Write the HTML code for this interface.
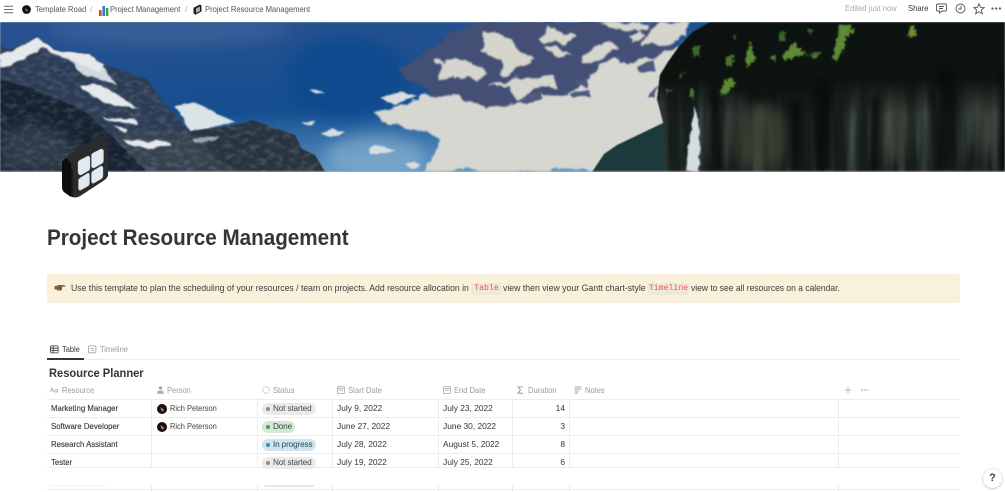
<!DOCTYPE html>
<html lang="en">
<head>
<meta charset="utf-8">
<title>Project Resource Management</title>
<style>
html,body{margin:0;padding:0;background:#fff}
body{width:1005px;height:492px;position:relative;overflow:hidden;font-family:"Liberation Sans",sans-serif;color:#37352f}
.t{position:absolute;white-space:nowrap;line-height:12px;font-size:8.4px;filter:blur(.25px)}
.s{transform:scaleX(.91);transform-origin:0 50%}
.r{transform:scaleX(.93);transform-origin:0 50%;-webkit-text-stroke:.12px #37352f}
.c{transform:scaleX(.925);transform-origin:0 50%;font-size:9.2px;color:#3f3d38}
.l{position:absolute;background:#ededec}
.pill{position:absolute;height:12px;border-radius:6px;font-size:8.2px;line-height:12px;white-space:nowrap;padding-left:11px;box-sizing:border-box;filter:blur(.25px);letter-spacing:-.14px}
.pill:before{content:"";position:absolute;left:4px;top:4px;width:4px;height:4px;border-radius:50%;background:var(--d)}
.h{color:#9b9a97;font-size:8.2px;transform:scaleX(.92);transform-origin:0 50%}
svg{position:absolute;overflow:visible}
code{position:absolute;font-family:"Liberation Mono",monospace;font-size:8.2px;line-height:12px;height:12px;background:#eee8d8;color:#eb5757;border-radius:2px;text-align:center;filter:blur(.25px)}
</style>
</head>
<body>
<!-- top bar -->
<svg style="left:4px;top:5px" width="10" height="10" viewBox="0 0 10 10"><path d="M0 1.2H9M0 4.5H9M0 7.8H9" stroke="#6b6a66" stroke-width="1"/></svg>
<svg style="left:22px;top:5px" width="9" height="9" viewBox="0 0 9 9"><circle cx="4.5" cy="4.5" r="4.4" fill="#14110f"/><path d="M3 3.2L6 5.2 5 6.6 3.4 5Z" fill="#b87a52"/></svg>
<div class="t s" style="left:35px;top:3px;color:#55534e">Template Road</div>
<div class="t" style="left:90px;top:3px;color:#b5b4b0">/</div>
<svg style="left:99px;top:5px" width="10" height="11" viewBox="0 0 10 11"><rect x="0" y="5" width="2.6" height="6" fill="#d8433b"/><rect x="3.4" y="1" width="2.6" height="10" fill="#3a7bc8"/><rect x="6.8" y="3" width="2.6" height="8" fill="#3aa655"/></svg>
<div class="t s" style="left:110px;top:3px;color:#55534e">Project Management</div>
<div class="t" style="left:185px;top:3px;color:#b5b4b0">/</div>
<svg style="left:193px;top:4px" width="9" height="11" viewBox="0 0 9 11"><path d="M1 3.5L7 .5 8.5 1.5V7.5L2.5 10.8 .5 9.5V4Z" fill="#1f2021"/><path d="M3 4.5L7 2.5V7L3 9Z" fill="#9fb2bd"/></svg>
<div class="t s" style="left:205px;top:3px;color:#55534e">Project Resource Management</div>
<div class="t s" style="left:845px;top:2px;color:#a9a8a4">Edited just now</div>
<div class="t s" style="left:907.5px;top:2px;color:#37352f">Share</div>
<svg style="left:936px;top:3px" width="11" height="11" viewBox="0 0 11 11" fill="none" stroke="#55534e" stroke-width=".9"><path d="M1.5 1H9.5A1 1 0 0 1 10.5 2V7A1 1 0 0 1 9.5 8H6L3.5 10V8H1.5A1 1 0 0 1 .5 7V2A1 1 0 0 1 1.5 1Z"/><path d="M3 3.5H8M3 5.5H7"/></svg>
<svg style="left:955px;top:3px" width="11" height="11" viewBox="0 0 11 11" fill="none" stroke="#55534e" stroke-width=".9"><circle cx="5.5" cy="5.5" r="4.5"/><path d="M6 2.8V6H3.2"/></svg>
<svg style="left:973px;top:3px" width="12" height="12" viewBox="0 0 12 12" fill="none" stroke="#55534e" stroke-width=".9"><path d="M6 .8L7.5 4.3 11.2 4.6 8.4 7 9.3 10.8 6 8.8 2.7 10.8 3.6 7 .8 4.6 4.5 4.3Z"/></svg>
<svg style="left:991px;top:7px" width="11" height="3" viewBox="0 0 11 3" fill="#55534e"><circle cx="1.5" cy="1.5" r="1.1"/><circle cx="5.2" cy="1.5" r="1.1"/><circle cx="8.9" cy="1.5" r="1.1"/></svg>

<!-- banner -->
<div style="position:absolute;left:0;top:22px;width:1005px;height:150px;overflow:hidden">
<svg style="left:0;top:0;filter:blur(.5px)" width="1005" height="150" viewBox="0 0 1005 150" color-interpolation-filters="sRGB">
<defs>
<linearGradient id="sky" x1="0" y1="0" x2=".4" y2="1"><stop offset="0" stop-color="#2a5290"/><stop offset=".6" stop-color="#144e90"/><stop offset="1" stop-color="#5f97c4"/></linearGradient>
<filter id="cloud" x="-10%" y="-10%" width="120%" height="120%" color-interpolation-filters="sRGB"><feTurbulence type="fractalNoise" baseFrequency="0.05" numOctaves="4" seed="3" result="n"/><feDisplacementMap in="SourceGraphic" in2="n" scale="16" xChannelSelector="R" yChannelSelector="G"/><feGaussianBlur stdDeviation=".7"/></filter>
<filter id="rock" x="-5%" y="-5%" width="110%" height="110%" color-interpolation-filters="sRGB"><feTurbulence type="fractalNoise" baseFrequency="0.09" numOctaves="3" seed="11" result="n"/><feDisplacementMap in="SourceGraphic" in2="n" scale="5" xChannelSelector="R" yChannelSelector="G"/><feGaussianBlur stdDeviation=".4"/></filter>
<filter id="rough" x="-40%" y="-40%" width="180%" height="180%" color-interpolation-filters="sRGB"><feTurbulence type="fractalNoise" baseFrequency="0.3" numOctaves="2" seed="4" result="n"/><feDisplacementMap in="SourceGraphic" in2="n" scale="7" xChannelSelector="R" yChannelSelector="G"/><feGaussianBlur stdDeviation=".45"/></filter>
<filter id="b2" x="-40%" y="-40%" width="180%" height="180%"><feGaussianBlur stdDeviation="3"/></filter>
<filter id="b6" x="-60%" y="-60%" width="220%" height="220%"><feGaussianBlur stdDeviation="7"/></filter>
<filter id="streak" x="0" y="0" width="100%" height="100%" color-interpolation-filters="sRGB"><feTurbulence type="fractalNoise" baseFrequency="0.085 0.007" numOctaves="3" seed="8"/><feColorMatrix values="0 0 0 0 .25  0 0 0 0 .29  0 0 0 0 .27  2.4 0 0 0 -1"/><feGaussianBlur stdDeviation=".8"/></filter>
<filter id="grain" x="0" y="0" width="100%" height="100%" color-interpolation-filters="sRGB"><feTurbulence type="fractalNoise" baseFrequency="0.12 0.22" numOctaves="3" seed="21"/><feColorMatrix values="0 0 0 0 .55  0 0 0 0 .6  0 0 0 0 .68  2.4 0 0 0 -1.05"/></filter>
<clipPath id="cliff"><path d="M657 77L660 53 668 40 680 23 693 10 710 0H1005V150H665L663 100Z"/></clipPath>
<clipPath id="mtn"><path d="M0 22L8 28 38 15 55 28 90 32 105 43 147 57 163 80 188 107 190 109 240 102 252 98 295 113 302 127 315 133 325 150H0Z"/></clipPath>
<clipPath id="hill"><path d="M0 57L33 67 83 88 113 115 147 150H0Z"/></clipPath>
<linearGradient id="top" x1="0" y1="0" x2="0" y2="1"><stop offset="0" stop-color="#0d1310"/><stop offset=".38" stop-color="#0d1310"/><stop offset=".62" stop-color="#0d1310" stop-opacity="0"/></linearGradient>
</defs>
<rect width="1005" height="150" fill="url(#sky)"/>
<ellipse cx="170" cy="8" rx="120" ry="16" fill="#4a6a9c" opacity=".5" filter="url(#b6)"/>
<ellipse cx="345" cy="55" rx="60" ry="40" fill="#0f4a8e" filter="url(#b6)"/>
<ellipse cx="375" cy="135" rx="50" ry="22" fill="#8db4d2" opacity=".6" filter="url(#b6)"/>
<!-- dark cloud mass -->
<path d="M425 30L480 0H680L670 45 640 65 560 70 500 90 470 86 440 78 415 62 400 45Z" fill="#434f74" filter="url(#cloud)"/>
<!-- main lower cloud -->
<path d="M373 93L423 75 457 72 473 82 507 85 517 80 547 72 570 70 590 57 600 43 633 37 660 33 685 20 690 90 640 150H430L440 117 407 107 397 100 383 100Z" fill="#d7d7d1" filter="url(#cloud)"/>
<!-- upper cloud patches -->
<g fill="#d5d5ce" filter="url(#cloud)">
<path d="M547 5L573 13 563 22 537 18Z"/>
<path d="M487 10L510 17 537 37 510 53 497 53 503 37 480 27Z"/>
<path d="M438 38L453 33 487 50 477 60 457 57 437 57Z"/>
<path d="M583 33L607 18 620 28 600 38 583 40Z"/>
<path d="M627 10L643 5 647 12 633 22Z"/>
<path d="M640 23L660 0 690 0 685 15 660 22Z"/>
<path d="M487 63L513 57 553 53 553 67 540 67 517 78 513 63Z"/>
<path d="M547 23L570 30 553 37Z"/>
<path d="M600 0H650V4L615 6Z"/>
</g>
<g fill="#4c5a80" filter="url(#rock)">
<path d="M570 71L590 68 592 74 574 75Z"/>
<path d="M517 80L540 70 543 77 527 82Z"/>
<path d="M647 75L657 64 655 76Z"/>
<path d="M637 44L653 38 655 50 640 50Z"/>
<path d="M573 60L588 57 587 67Z"/>
</g>
<g fill="#d8dde0" filter="url(#rock)">
<path d="M380 75L400 71 418 73 393 83Z"/>
<path d="M368 128L375 123 397 128 370 133Z"/>
<path d="M405 143L413 138 420 143 412 147Z"/>
<path d="M310 67L318 68 325 71 316 72Z"/>
<path d="M320 112L332 107 345 110 330 116Z"/>
<path d="M302 100L315 99 313 104Z"/>
</g>
<!-- mountains -->
<path d="M175 83L195 80 235 100 190 110Z" fill="#dbe3e7" filter="url(#rock)"/>
<g clip-path="url(#mtn)">
<rect width="340" height="150" fill="#2d3c55"/>
<path d="M186 112L240 102 252 98 295 113 302 127 315 133 325 150H150Z" fill="#28333e"/>
<path d="M110 110L190 110 230 150H130Z" fill="#36434f" filter="url(#b2)"/>
<rect width="340" height="150" filter="url(#grain)" opacity=".35"/>
<g fill="#e4e9ec" filter="url(#rock)">
<path d="M13 28L38 15 55 28 90 32 105 43 98 50 84 44 63 36 42 26 25 36 10 44 0 46V32Z"/>
<path d="M63 33L100 43 117 63 83 53Z" opacity=".9"/>
<path d="M80 63L100 63 118 73 138 87 113 83 93 75Z"/>
<path d="M103 95L137 98 138 102 113 100Z"/>
<path d="M112 105L127 107 125 111Z"/>
<path d="M122 118L170 120 172 123 150 127 133 125Z"/>
<path d="M193 117L220 114 212 120 195 121Z" opacity=".6"/>
</g>
</g>
<!-- front hill -->
<g clip-path="url(#hill)">
<rect width="160" height="150" fill="#172230"/>
<path d="M0 110L30 100 60 110 100 150H0Z" fill="#3a4654" opacity=".7" filter="url(#b6)"/>
<rect width="160" height="150" filter="url(#grain)" opacity=".3"/>
</g>
<!-- forest and cliff -->
<path d="M592 150L604 132 617 123 640 112 663 101 670 150Z" fill="#1c3a3c"/>
<g clip-path="url(#cliff)">
<rect x="650" width="355" height="150" fill="#161d1d"/>
<rect x="650" y="20" width="355" height="130" filter="url(#streak)"/>
<ellipse cx="985" cy="85" rx="18" ry="45" fill="#4a5244" opacity=".5" filter="url(#b6)"/>
<ellipse cx="895" cy="100" rx="16" ry="40" fill="#4a5240" opacity=".5" filter="url(#b6)"/>
<ellipse cx="760" cy="115" rx="30" ry="35" fill="#4a4f38" opacity=".5" filter="url(#b6)"/>
<rect x="650" width="355" height="150" fill="url(#top)"/>
<path d="M655 60L700 55 760 80 820 58 900 48 1005 45V0H655Z" fill="#0d1310" filter="url(#b2)" opacity=".85"/>
<g filter="url(#b2)" fill="#080c0c" opacity=".8">
<rect x="658" y="85" width="8" height="65" opacity=".4"/>
<rect x="710" y="70" width="10" height="80"/>
<rect x="790" y="80" width="11" height="70"/>
<rect x="815" y="60" width="18" height="90"/>
<rect x="870" y="75" width="10" height="75"/>
<rect x="938" y="50" width="16" height="100"/>
<rect x="1000" y="50" width="8" height="100"/>
</g>
<g fill="#5d8a33" filter="url(#rough)">
<path d="M838 3L850 3 854 10 846 15 843 28 836 40 832 36 836 20Z"/>
<path d="M783 32L795 20 800 27 808 32 796 35 784 39Z"/>
<path d="M745 38L750 20 753 30 757 36 748 46Z" />
<path d="M725 35L733 32 733 42 727 46Z" fill="#4c7630"/>
<path d="M770 36L775 33 776 39Z" fill="#4c7630"/>
<path d="M720 72L725 58 732 55 735 62 727 72Z"/>
<path d="M692 25L700 24 700 33 694 35Z" fill="#3d662f"/>
<path d="M678 55L685 49 680 57Z" fill="#4c7630"/>
<path d="M666 68L673 66 667 72Z" fill="#4c7630"/>
<path d="M690 67L694 67 695 78 690 74Z" fill="#4c7630"/>
<path d="M779 10L785 8 785 18 778 20Z" fill="#3d662f"/>
<path d="M807 8L813 7 811 15Z" fill="#3d662f"/>
<path d="M910 4L915 4 917 14 908 15Z" fill="#6c8a38"/>
<path d="M733 14L736 13 735 18Z" fill="#3d662f"/>
<path d="M810 33L820 30 815 38Z" fill="#4c7630"/>
</g>
<path d="M695 84L700 110 699 150H685L689 120Z" fill="#d6dde2" filter="url(#rock)"/>
</g>
<rect y="148.5" width="1005" height="1.5" fill="#8d9397" opacity=".45"/>
</svg>
</div>

<!-- page icon -->
<svg style="left:0;top:0" width="130" height="210" viewBox="0 0 130 210">
<path d="M62 162L68 157 96 138Q102 134 108 139V174Q108 178 103 181L80 196Q75 199 70 196L64 192Q62 190 62 186Z" fill="#191a1a"/>
<path d="M68 156L96 138Q104 134 108 140V174Q108 178 103 181L80 196Q75 199 73 195V170Q68 162 68 156Z" fill="#2b2b2b"/>
<path d="M62 162Q63 160 66 158L71 163V197L64 192Q62 190 62 186Z" fill="#0d0d0d"/>
<g fill="#dfeaf2" stroke="#b9c9d6" stroke-width=".4">
<path d="M80 160L88 156Q90 156 90 158V168Q90 170 88 171L81 175Q78 175 78 172V163Q78 161 80 160Z"/>
<path d="M93 153L101 149Q103.5 149 103.5 151V161Q103.5 163 101 164L94 168Q91.5 168 91.5 166V155Q91.5 154 93 153Z"/>
<path d="M80 178L88 173Q89.5 173 89.5 175V183Q89.5 185 88 186L81 190Q78.5 191 78.5 188V180Q78.5 179 80 178Z"/>
<path d="M93 171L101 166Q103 166 103 168V176Q103 178 101 179L94 183Q91.5 184 91.5 181V173Q91.5 172 93 171Z"/>
</g>
</svg>

<!-- title -->
<div style="position:absolute;left:47px;top:224.5px;font-size:22.2px;line-height:26px;font-weight:700;color:#37352f;white-space:nowrap;filter:blur(.25px);transform:scaleX(.93);transform-origin:0 50%">Project Resource Management</div>

<!-- callout -->
<div style="position:absolute;left:47px;top:273.5px;width:912.5px;height:29px;background:#faf1dc;border-radius:2px"></div>
<svg style="left:54px;top:283px" width="12" height="9" viewBox="0 0 12 9"><path d="M.5 3H3L4 2H8.5L11.5 2.6V3.6L8 3.8V6.5L7 7.5H3.5L2.5 6.5H.5Z" fill="#8a5a36"/></svg>
<div class="t c" style="left:71px;top:282px;transform:scaleX(.942)">Use this template to plan the scheduling of your resources / team on projects. Add resource allocation in</div>
<code style="left:471px;top:283px;width:31px">Table</code>
<div class="t c" style="left:503px;top:282px;transform:scaleX(.95)">view then view your Gantt chart-style</div>
<code style="left:648px;top:283px;width:41px">Timeline</code>
<div class="t c" style="left:691px;top:282px">view to see all resources on a calendar.</div>

<!-- tabs -->
<svg style="left:50px;top:345px" width="9" height="9" viewBox="0 0 9 9" fill="none" stroke="#37352f" stroke-width=".8"><rect x=".5" y=".9" width="7.6" height="7" rx=".8"/><path d="M.5 3.2H8.1M.5 5.6H8.1M3.2 1V8"/></svg>
<div class="t s" style="left:62px;top:343.5px;font-size:8.2px;color:#37352f">Table</div>
<svg style="left:88px;top:345px" width="9" height="9" viewBox="0 0 9 9" fill="none" stroke="#9b9a97" stroke-width=".8"><rect x=".5" y=".9" width="7.4" height="7" rx=".6"/><path d="M2.5 3.5H6M3.5 5.5H6.5"/></svg>
<div class="t s" style="left:99.5px;top:343.5px;font-size:8.2px;color:#9b9a97">Timeline</div>
<div class="l" style="left:47px;top:359px;width:913px;height:1px"></div>
<div style="position:absolute;left:47px;top:358px;width:37px;height:2px;background:#37352f"></div>

<div style="position:absolute;left:48.5px;top:366px;font-size:12.3px;line-height:14px;font-weight:700;color:#37352f;white-space:nowrap;filter:blur(.2px);transform:scaleX(.905);transform-origin:0 50%">Resource Planner</div>

<!-- header -->
<svg style="left:50px;top:386px" width="9" height="8" viewBox="0 0 9 8" fill="none" stroke="#a9a8a4" stroke-width=".7"><path d="M.5 6L2 1.5 3.5 6M1 4.5H3"/><circle cx="6" cy="4.7" r="1.4"/><path d="M7.5 3V6.2"/></svg>
<div class="t h" style="left:61.5px;top:384.5px">Resource</div>
<svg style="left:156px;top:386px" width="8" height="8" viewBox="0 0 8 8" fill="#a9a8a4"><circle cx="4.5" cy="2" r="1.7"/><path d="M1 7.8L2 4.8H7L7.8 7.8Z"/></svg>
<div class="t h" style="left:167px;top:384.5px">Person</div>
<svg style="left:262px;top:386px" width="8" height="8" viewBox="0 0 8 8" fill="none" stroke="#b0afab" stroke-width=".8" stroke-dasharray="1.3 .8"><circle cx="4" cy="4" r="3.3"/></svg>
<div class="t h" style="left:273px;top:384.5px">Status</div>
<svg style="left:337px;top:386px" width="8" height="8" viewBox="0 0 8 8" fill="none" stroke="#a9a8a4" stroke-width=".8"><rect x=".5" y=".7" width="7" height="6.8" rx=".7"/><path d="M.5 2.4H7.5M2 4.2H6"/></svg>
<div class="t h" style="left:348px;top:384.5px">Start Date</div>
<svg style="left:443px;top:386px" width="8" height="8" viewBox="0 0 8 8" fill="none" stroke="#a9a8a4" stroke-width=".8"><rect x=".5" y=".7" width="7" height="6.8" rx=".7"/><path d="M.5 2.4H7.5M2 4.2H6"/></svg>
<div class="t h" style="left:453.5px;top:384.5px">End Date</div>
<svg style="left:517px;top:386px" width="7" height="8" viewBox="0 0 7 8" fill="none" stroke="#85847f" stroke-width=".8"><path d="M6 1H1L3.5 4 1 7.2H6"/></svg>
<div class="t h" style="left:527.5px;top:384.5px">Duration</div>
<svg style="left:574px;top:386px" width="8" height="8" viewBox="0 0 8 8" fill="none" stroke="#a9a8a4" stroke-width=".9"><path d="M.5 1H7.5M.5 3H7.5M.5 5H5M.5 7H4"/></svg>
<div class="t h" style="left:584.5px;top:384.5px">Notes</div>
<svg style="left:844px;top:386px" width="8" height="8" viewBox="0 0 8 8" fill="none" stroke="#a9a8a4" stroke-width=".8"><path d="M4 .8V7.2M.8 4H7.2"/></svg>
<svg style="left:861px;top:389px" width="7" height="2" viewBox="0 0 7 2" fill="#a9a8a4"><circle cx="1" cy="1" r=".8"/><circle cx="3.5" cy="1" r=".8"/><circle cx="6" cy="1" r=".8"/></svg>

<!-- grid -->
<div class="l" style="left:47px;top:399px;width:913px;height:1px"></div>
<div class="l" style="left:47px;top:417px;width:913px;height:1px"></div>
<div class="l" style="left:47px;top:435px;width:913px;height:1px"></div>
<div class="l" style="left:47px;top:453px;width:913px;height:1px"></div>
<div class="l" style="left:47px;top:467px;width:913px;height:1px"></div>
<div class="l" style="left:47px;top:489px;width:913px;height:1px"></div>
<div class="l" style="left:151px;top:400px;width:1px;height:67px"></div>
<div class="l" style="left:257px;top:400px;width:1px;height:67px"></div>
<div class="l" style="left:332px;top:400px;width:1px;height:67px"></div>
<div class="l" style="left:438px;top:400px;width:1px;height:67px"></div>
<div class="l" style="left:512px;top:400px;width:1px;height:67px"></div>
<div class="l" style="left:569px;top:400px;width:1px;height:67px"></div>
<div class="l" style="left:838px;top:400px;width:1px;height:67px"></div>
<div class="l" style="left:151px;top:485px;width:1px;height:7px"></div>
<div class="l" style="left:257px;top:485px;width:1px;height:7px"></div>
<div class="l" style="left:332px;top:485px;width:1px;height:7px"></div>
<div class="l" style="left:438px;top:485px;width:1px;height:7px"></div>
<div class="l" style="left:512px;top:485px;width:1px;height:7px"></div>
<div class="l" style="left:569px;top:485px;width:1px;height:7px"></div>
<div class="l" style="left:838px;top:485px;width:1px;height:7px"></div>
<div style="position:absolute;left:50px;top:485px;width:57px;height:1px;background:#f3f3f2"></div>
<div style="position:absolute;left:264px;top:485px;width:50px;height:1.5px;background:#e6e6e5;border-radius:0 0 4px 4px"></div>

<!-- rows -->
<div class="t r" style="left:51px;top:402px;color:#37352f">Marketing Manager</div>
<div class="t r" style="left:51px;top:420px;color:#37352f">Software Developer</div>
<div class="t r" style="left:51px;top:438px;color:#37352f">Research Assistant</div>
<div class="t r" style="left:51px;top:456px;color:#37352f">Tester</div>

<svg style="left:157px;top:403.5px" width="10" height="10" viewBox="0 0 10 10"><circle cx="5" cy="5" r="5" fill="#14110f"/><path d="M3.5 3L7 5.5 6 8 4 6Z" fill="#b87a52"/></svg>
<div class="t" style="left:170px;top:402px;color:#45433d;transform:scaleX(.89);transform-origin:0 50%">Rich Peterson</div>
<svg style="left:157px;top:421.5px" width="10" height="10" viewBox="0 0 10 10"><circle cx="5" cy="5" r="5" fill="#14110f"/><path d="M3.5 3L7 5.5 6 8 4 6Z" fill="#b87a52"/></svg>
<div class="t" style="left:170px;top:420px;color:#45433d;transform:scaleX(.89);transform-origin:0 50%">Rich Peterson</div>

<div class="pill" style="left:262px;top:403px;width:54px;background:#ebeaea;--d:#8c8b88;color:#4a4945">Not started</div>
<div class="pill" style="left:262px;top:421px;width:33px;background:#d3e8d6;--d:#4f9768;color:#2f4a38">Done</div>
<div class="pill" style="left:262px;top:439px;width:53.5px;background:#cfe4ef;--d:#3a85b5;color:#2c4654">In progress</div>
<div class="pill" style="left:262px;top:457px;width:54px;background:#ebeaea;--d:#8c8b88;color:#4a4945">Not started</div>

<div class="t" style="left:337px;top:402px">July 9, 2022</div>
<div class="t" style="left:337px;top:420px">June 27, 2022</div>
<div class="t" style="left:337px;top:438px">July 28, 2022</div>
<div class="t" style="left:337px;top:456px">July 19, 2022</div>
<div class="t" style="left:443px;top:402px">July 23, 2022</div>
<div class="t" style="left:443px;top:420px">June 30, 2022</div>
<div class="t" style="left:443px;top:438px">August 5, 2022</div>
<div class="t" style="left:443px;top:456px">July 25, 2022</div>
<div class="t" style="left:512px;width:53px;text-align:right;top:402px">14</div>
<div class="t" style="left:512px;width:53px;text-align:right;top:420px">3</div>
<div class="t" style="left:512px;width:53px;text-align:right;top:438px">8</div>
<div class="t" style="left:512px;width:53px;text-align:right;top:456px">6</div>

<!-- help -->
<div style="position:absolute;left:983px;top:469px;width:19px;height:19px;border-radius:50%;background:#fff;box-shadow:0 0 0 1px rgba(15,15,15,.06),0 1px 3px rgba(15,15,15,.16);text-align:center;font-size:11px;font-weight:700;line-height:19px;color:#45433d">?</div>
</body>
</html>
